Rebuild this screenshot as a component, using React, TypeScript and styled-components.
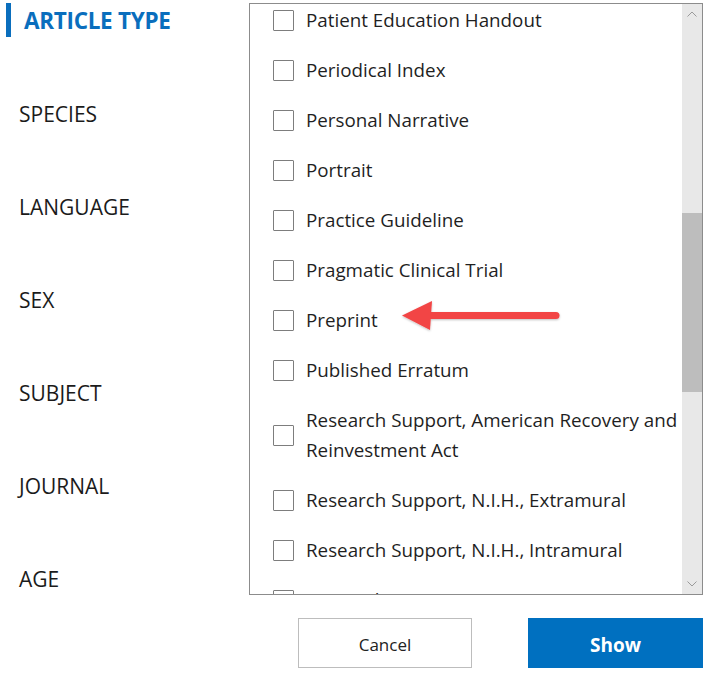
import React, { useLayoutEffect, useRef } from "react";
import styled, { createGlobalStyle } from "styled-components";

const Global = createGlobalStyle`
  html, body { margin: 0; padding: 0; background: #fff; }
  body { font-family: "Open Sans", "Noto Sans", "Liberation Sans", sans-serif; color: #1b1b1b; }
  * { box-sizing: border-box; }
`;

const Page = styled.div`
  position: relative;
  display: flex;
  width: 718px;
  height: 691px;
`;

const Nav = styled.nav`
  width: 249px;
  display: flex;
  flex-direction: column;
  padding-top: 3px;
  gap: 59px;
`;

const NavItem = styled.div<{ $active?: boolean }>`
  height: 34px;
  display: flex;
  align-items: center;
  white-space: nowrap;
  font-size: ${(p) => (p.$active ? "22.5px" : "21px")};
  font-weight: ${(p) => (p.$active ? 700 : 400)};
  color: ${(p) => (p.$active ? "#0a6ebd" : "#1b1b1b")};
  border-left: ${(p) => (p.$active ? "5px solid #0a6ebd" : "none")};
  margin-left: ${(p) => (p.$active ? "6px" : "0")};
  padding-left: ${(p) => (p.$active ? "13px" : "19px")};
  letter-spacing: ${(p) => (p.$active ? "-0.3px" : "0")};
  &:nth-child(2) { margin-top: 1px; }
`;

const Main = styled.div`
  display: flex;
  flex-direction: column;
  padding-top: 3px;
`;

const ListBox = styled.div`
  width: 454px;
  height: 592px;
  border: 1px solid #8c8c8c;
  display: flex;
`;

const Scroller = styled.div`
  flex: 1;
  overflow-y: auto;
  scrollbar-width: none;
  &::-webkit-scrollbar { display: none; }
`;

const Row = styled.label`
  display: flex;
  align-items: center;
  padding: 10px 4px 10px 23px;
  font-size: 18.8px;
  line-height: 30px;
  color: #1f1f1f;
`;

const Box = styled.span`
  flex: none;
  width: 21px;
  height: 21px;
  border: 1px solid #7d7d7d;
  border-radius: 1px;
  background: #fff;
  margin-right: 12px;
`;

const Track = styled.div`
  width: 20px;
  background: #e8e8e8;
  display: flex;
  flex-direction: column;
  align-items: center;
`;

const ArrowBtn = styled.div`
  height: 20px;
  width: 20px;
  display: flex;
  align-items: center;
  justify-content: center;
`;

const TrackSpace = styled.div`
  flex: 1;
  width: 100%;
  display: flex;
  flex-direction: column;
  padding-top: 189px;
`;

const Thumb = styled.div`
  width: 20px;
  height: 179px;
  background: #bdbdbd;
`;

const Buttons = styled.div`
  display: flex;
  gap: 56px;
  margin-top: 23px;
  padding-left: 49px;
`;

const Button = styled.button<{ $primary?: boolean }>`
  width: ${(p) => (p.$primary ? "175px" : "174px")};
  height: 50px;
  padding: 3px 0 0;
  font-family: inherit;
  font-size: ${(p) => (p.$primary ? "19px" : "17px")};
  font-weight: ${(p) => (p.$primary ? 700 : 400)};
  color: ${(p) => (p.$primary ? "#fff" : "#222")};
  background: ${(p) => (p.$primary ? "#0070c0" : "#fff")};
  border: ${(p) => (p.$primary ? "none" : "1px solid #bdbdbd")};
  cursor: pointer;
`;

const Pointer = styled.svg`
  position: absolute;
  left: 396px;
  top: 296px;
  overflow: visible;
`;

const navItems = ["ARTICLE TYPE", "SPECIES", "LANGUAGE", "SEX", "SUBJECT", "JOURNAL", "AGE"];

const items = [
  "Patient Education Handout",
  "Periodical Index",
  "Personal Narrative",
  "Portrait",
  "Practice Guideline",
  "Pragmatic Clinical Trial",
  "Preprint",
  "Published Erratum",
  "Research Support, American Recovery and Reinvestment Act",
  "Research Support, N.I.H., Extramural",
  "Research Support, N.I.H., Intramural",
  "Research Support, Non-U.S. Gov't",
];

export default function App() {
  const ref = useRef<HTMLDivElement>(null);
  useLayoutEffect(() => {
    if (ref.current) ref.current.scrollTop = 9;
  }, []);
  return (
    <Page>
      <Global />
      <Nav>
        {navItems.map((n, i) => (
          <NavItem key={n} $active={i === 0}>
            {n}
          </NavItem>
        ))}
      </Nav>
      <Main>
        <ListBox>
          <Scroller ref={ref}>
            {items.map((it) => (
              <Row key={it}>
                <Box />
                <span>{it}</span>
              </Row>
            ))}
          </Scroller>
          <Track>
            <ArrowBtn>
              <svg width="10" height="6" viewBox="0 0 10 6">
                <path d="M0.5 5.5 L5 1 L9.5 5.5" fill="none" stroke="#9a9a9a" strokeWidth="1" />
              </svg>
            </ArrowBtn>
            <TrackSpace>
              <Thumb />
            </TrackSpace>
            <ArrowBtn>
              <svg width="10" height="6" viewBox="0 0 10 6">
                <path d="M0.5 0.5 L5 5 L9.5 0.5" fill="none" stroke="#9a9a9a" strokeWidth="1" />
              </svg>
            </ArrowBtn>
          </Track>
        </ListBox>
        <Buttons>
          <Button>Cancel</Button>
          <Button $primary>Show</Button>
        </Buttons>
      </Main>
      <Pointer width="170" height="40" viewBox="0 0 170 40">
        <defs>
          <filter id="sh" x="-10%" y="-30%" width="120%" height="160%">
            <feDropShadow dx="0" dy="1" stdDeviation="1" floodColor="#000" floodOpacity="0.25" />
          </filter>
        </defs>
        <g filter="url(#sh)">
          <line x1="30" y1="19.5" x2="160" y2="19.5" stroke="#f24545" strokeWidth="7" strokeLinecap="round" />
          <path d="M6 19.5 L36 5 L34 34 Z" fill="#f24545" />
        </g>
      </Pointer>
    </Page>
  );
}
